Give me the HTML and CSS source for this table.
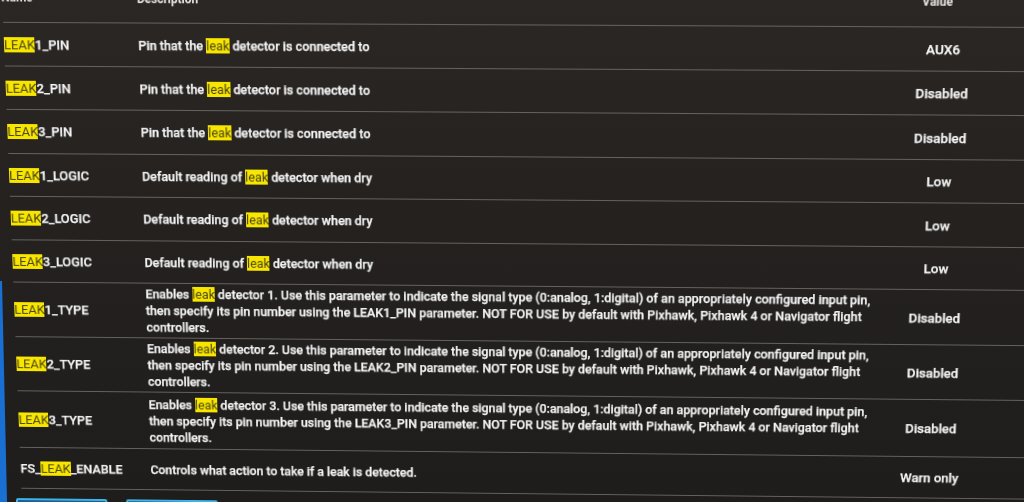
FILE: index.html
```html
<!DOCTYPE html>
<html>
<head>
<meta charset="utf-8">
<link rel="stylesheet" href="styles.css">
</head>
<body>
<div class="screen">
  <div class="params">
    <div class="head">
      <div class="c-name">Name</div>
      <div class="c-desc">Description</div>
      <div class="c-val">Value</div>
    </div>
    <div class="row">
      <div class="c-name"><span class="hl">LEAK</span>1_PIN</div>
      <div class="c-desc">Pin that the <span class="hl">leak</span> detector is connected to</div>
      <div class="c-val">AUX6</div>
    </div>
    <div class="row">
      <div class="c-name"><span class="hl">LEAK</span>2_PIN</div>
      <div class="c-desc">Pin that the <span class="hl">leak</span> detector is connected to</div>
      <div class="c-val">Disabled</div>
    </div>
    <div class="row h44">
      <div class="c-name"><span class="hl">LEAK</span>3_PIN</div>
      <div class="c-desc">Pin that the <span class="hl">leak</span> detector is connected to</div>
      <div class="c-val">Disabled</div>
    </div>
    <div class="row">
      <div class="c-name"><span class="hl">LEAK</span>1_LOGIC</div>
      <div class="c-desc">Default reading of <span class="hl">leak</span> detector when dry</div>
      <div class="c-val">Low</div>
    </div>
    <div class="row h44">
      <div class="c-name"><span class="hl">LEAK</span>2_LOGIC</div>
      <div class="c-desc">Default reading of <span class="hl">leak</span> detector when dry</div>
      <div class="c-val">Low</div>
    </div>
    <div class="row">
      <div class="c-name"><span class="hl">LEAK</span>3_LOGIC</div>
      <div class="c-desc">Default reading of <span class="hl">leak</span> detector when dry</div>
      <div class="c-val">Low</div>
    </div>
    <div class="row tall">
      <div class="c-name"><span class="hl">LEAK</span>1_TYPE</div>
      <div class="c-desc">Enables <span class="hl">leak</span> detector 1. Use this parameter to indicate the signal type (0:analog, 1:digital) of an appropriately configured input pin, then specify its pin number using the LEAK1_PIN parameter. NOT FOR USE by default with Pixhawk, Pixhawk 4 or Navigator flight controllers.</div>
      <div class="c-val">Disabled</div>
    </div>
    <div class="row tall">
      <div class="c-name"><span class="hl">LEAK</span>2_TYPE</div>
      <div class="c-desc">Enables <span class="hl">leak</span> detector 2. Use this parameter to indicate the signal type (0:analog, 1:digital) of an appropriately configured input pin, then specify its pin number using the LEAK2_PIN parameter. NOT FOR USE by default with Pixhawk, Pixhawk 4 or Navigator flight controllers.</div>
      <div class="c-val">Disabled</div>
    </div>
    <div class="row tall taller">
      <div class="c-name"><span class="hl">LEAK</span>3_TYPE</div>
      <div class="c-desc">Enables <span class="hl">leak</span> detector 3. Use this parameter to indicate the signal type (0:analog, 1:digital) of an appropriately configured input pin, then specify its pin number using the LEAK3_PIN parameter. NOT FOR USE by default with Pixhawk, Pixhawk 4 or Navigator flight controllers.</div>
      <div class="c-val">Disabled</div>
    </div>
    <div class="row last">
      <div class="c-name">FS_<span class="hl">LEAK</span>_ENABLE</div>
      <div class="c-desc">Controls what action to take if a leak is detected.</div>
      <div class="c-val">Warn only</div>
    </div>
    <div class="buttons">
      <span class="btn"></span>
      <span class="btn"></span>
    </div>
  </div>
  <div class="edge"></div>
</div>
</body>
</html>
```

FILE: styles.css
```css
html, body {
  margin: 0;
  padding: 0;
  width: 1024px;
  height: 502px;
  overflow: hidden;
}
body {
  background: #211f1e;
  font-family: Roboto, "Liberation Sans", sans-serif;
  font-weight: 500;
  color: #f4f4f4;
}
.screen {
  position: relative;
  width: 1024px;
  height: 502px;
  overflow: hidden;
  background: linear-gradient(180deg, #2b2724 0%, #252220 35%, #1f1d1c 100%);
}
/* the photo of the screen is taken at a slight angle: a projective
   transform reproduces the perspective of the table */
.params {
  display: flex;
  flex-direction: column;
  margin-left: -2px;
  margin-right: -40px;
  transform-origin: 581px 0;
  transform: matrix3d(1, 0.00465, 0, -0.0000125, -0.00479, 1.03, 0, 0.000078, 0, 0, 1, 0, 0, 0, 0, 1);
}
.head {
  display: flex;
  align-items: flex-start;
  height: 31px;
  margin-top: -7px;
  line-height: 15px;
  font-size: 12px;
  font-weight: 700;
  color: #e8e6e4;
}
.row {
  display: flex;
  align-items: center;
  box-sizing: border-box;
  height: 43px;
  border-top: 1px solid #64615e;
  -webkit-text-stroke: 0.25px #f4f4f4;
}
.row.h44 {
  height: 44px;
}
.row.tall {
  height: 56px;
}
.row.taller {
  height: 59px;
}
.row.last {
  height: 44px;
  border-bottom: 1px solid #64615e;
}
.c-name {
  width: 136.5px;
  flex: none;
  font-size: 13.2px;
}
.c-desc {
  flex: 1;
  font-size: 12.8px;
  line-height: 17px;
}
.c-val {
  width: 90px;
  margin-right: 76px;
  flex: none;
  text-align: center;
  font-size: 13.5px;
}
.head .c-name {
  margin-left: -1px;
  width: 137.5px;
  font-size: 12px;
}
.head .c-desc {
  font-size: 12px;
}
.head .c-val {
  font-size: 12px;
  box-sizing: border-box;
  padding-right: 14px;
}
.hl {
  background: #f8e600;
  color: #4a4619;
  font-weight: 400;
  -webkit-text-stroke: 0;
}
.buttons {
  display: flex;
  gap: 20px;
  margin-left: -6px;
  margin-top: 10px;
}
.btn {
  display: block;
  width: 96px;
  height: 16px;
  box-sizing: border-box;
  border: 2px solid #3cb6ea;
  border-radius: 2px;
  background: #1d5f90;
}
.edge {
  position: absolute;
  left: 0;
  top: 281px;
  width: 7px;
  height: 221px;
  background: #1a6fd2;
  clip-path: polygon(0 0, 2px 0, 7px 100%, 0 100%);
}
```
